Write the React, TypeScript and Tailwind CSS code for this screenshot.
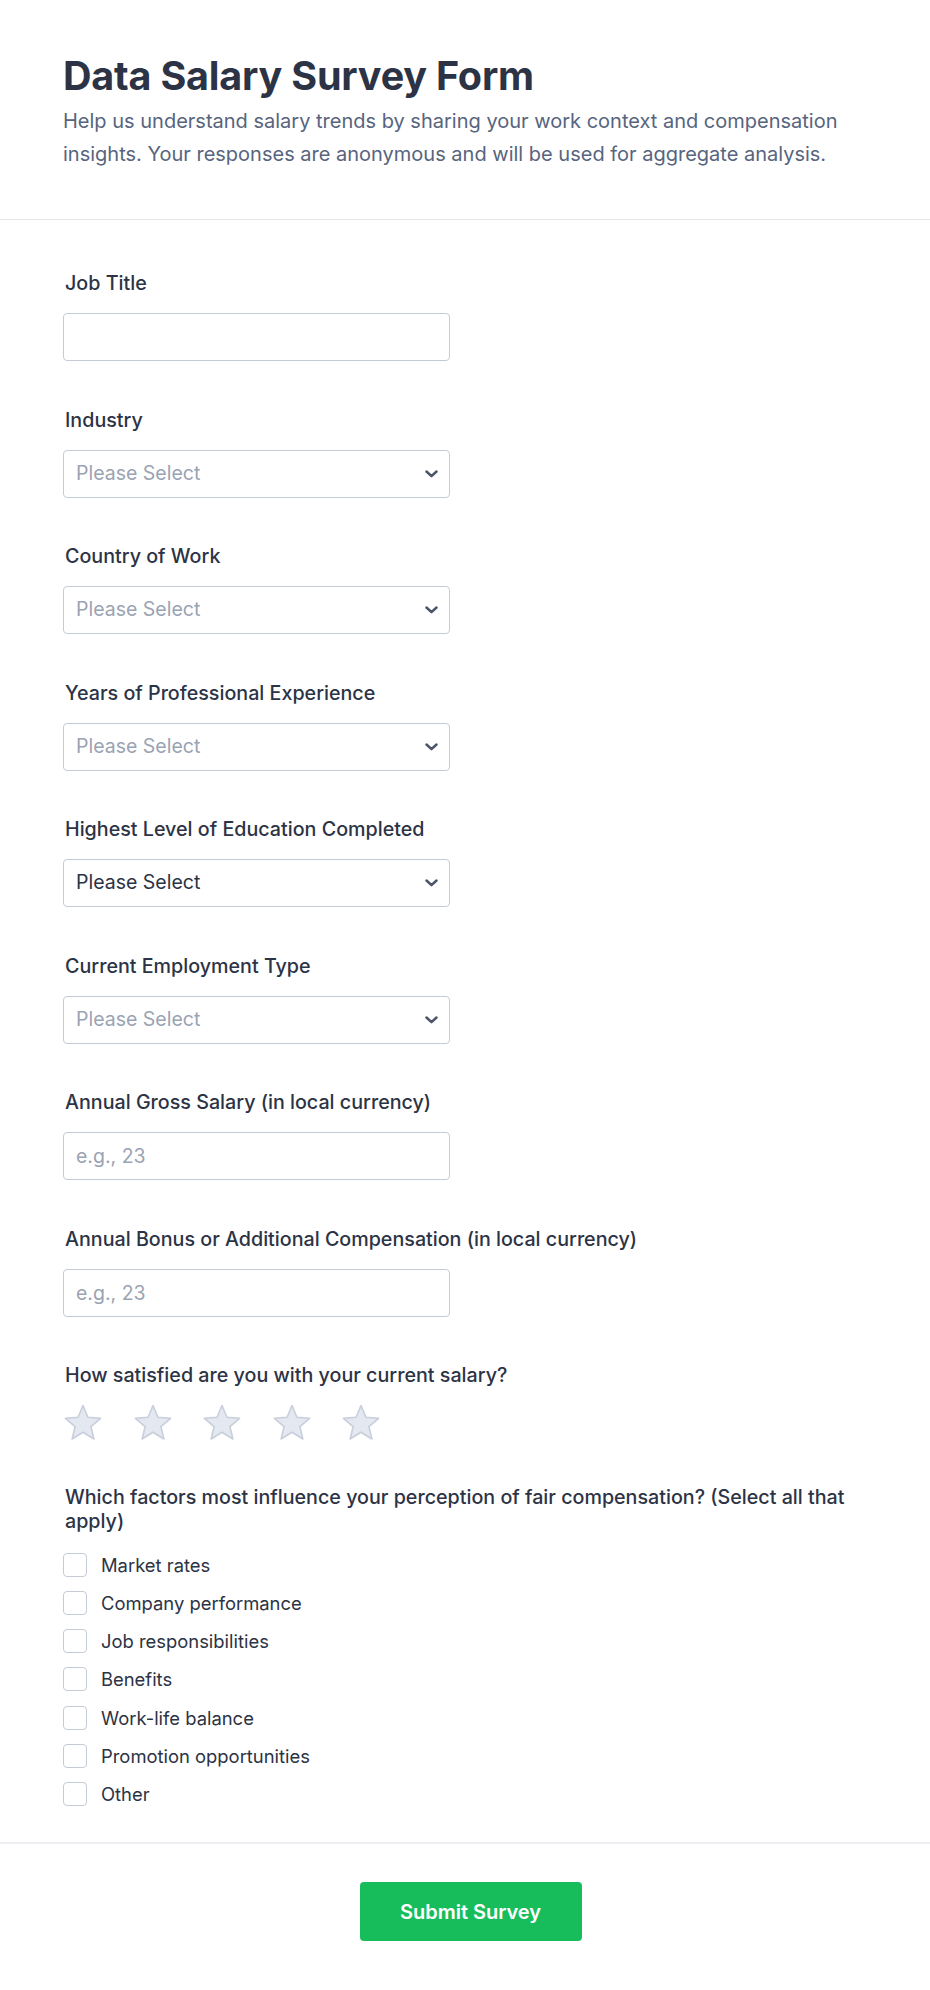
import React from "react";

const labelCls =
  "block pl-[2px] text-[19.7px] leading-[24px] font-medium text-[#2c3345]";

function Chevron() {
  return (
    <svg
      className="pointer-events-none absolute right-[12px] top-1/2 -translate-y-1/2"
      width="13"
      height="8"
      viewBox="0 0 13 8"
      fill="none"
    >
      <path
        d="M1.5 1.5L6.5 6.2L11.5 1.5"
        stroke="#4b5569"
        strokeWidth="2.5"
        strokeLinecap="round"
        strokeLinejoin="round"
      />
    </svg>
  );
}

function TextField({ label, placeholder }: { label: string; placeholder?: string }) {
  return (
    <div className="flex flex-col gap-[18px]">
      <label className={labelCls}>{label}</label>
      <input
        type="text"
        placeholder={placeholder}
        className="h-[48px] w-[387px] rounded-[4px] border border-[#c5cbd6] bg-white px-[12px] text-[19.5px] text-[#2c3345] outline-none placeholder:text-[#9aa3b3]"
      />
    </div>
  );
}

function SelectField({ label, dark }: { label: string; dark?: boolean }) {
  return (
    <div className="flex flex-col gap-[18px]">
      <label className={labelCls}>{label}</label>
      <div className="relative w-[387px]">
        <select
          defaultValue=""
          className={
            dark
              ? "h-[48px] w-full appearance-none rounded-[4px] border border-[#c5cbd6] bg-white px-[12px] text-[19.5px] text-[#2c3345] outline-none"
              : "h-[48px] w-full appearance-none rounded-[4px] border border-[#c5cbd6] bg-white px-[12px] text-[19.5px] text-[#9aa3b3] outline-none"
          }
        >
          <option value="">Please Select</option>
        </select>
        <Chevron />
      </div>
    </div>
  );
}

function Star() {
  return (
    <svg width="40" height="38" viewBox="0 0 40 38" fill="none">
      <path
        d="M20 1.5 L24.88 13.29 L37.6 14.28 L27.89 22.56 L30.87 34.97 L20 28.3 L9.13 34.97 L12.11 22.56 L2.4 14.28 L15.12 13.29 Z"
        fill="#e4e8f0"
        stroke="#c8cedb"
        strokeWidth="1.6"
        strokeLinejoin="round"
      />
    </svg>
  );
}

const factors = [
  "Market rates",
  "Company performance",
  "Job responsibilities",
  "Benefits",
  "Work-life balance",
  "Promotion opportunities",
  "Other",
];

export default function App() {
  return (
    <div className="min-h-[1990px] bg-white font-['Inter','Noto_Sans',sans-serif]">
      <header className="border-b border-[#e3e5ea] px-[63px] pt-[52px] pb-[48px]">
        <h1 className="text-[39.5px] leading-[48px] font-bold tracking-[-0.005em] text-[#2c3345]">
          Data Salary Survey Form
        </h1>
        <p className="mt-[5px] text-[20px] leading-[33px] text-[#57647e]">
          Help us understand salary trends by sharing your work context and compensation
          insights. Your responses are anonymous and will be used for aggregate analysis.
        </p>
      </header>

      <form className="flex flex-col gap-[46.5px] px-[63px] pt-[51px] pb-[36px]">
        <TextField label="Job Title" />
        <SelectField label="Industry" />
        <SelectField label="Country of Work" />
        <SelectField label="Years of Professional Experience" />
        <SelectField label="Highest Level of Education Completed" dark />
        <SelectField label="Current Employment Type" />
        <TextField label="Annual Gross Salary (in local currency)" placeholder="e.g., 23" />
        <TextField
          label="Annual Bonus or Additional Compensation (in local currency)"
          placeholder="e.g., 23"
        />

        <div className="flex flex-col gap-[17px]">
          <label className={labelCls}>How satisfied are you with your current salary?</label>
          <div className="flex gap-[29.5px]">
            {[0, 1, 2, 3, 4].map((i) => (
              <Star key={i} />
            ))}
          </div>
        </div>

        <div className="mt-[-4px] flex flex-col gap-[20px]">
          <label className={labelCls}>
            Which factors most influence your perception of fair compensation? (Select all that
            apply)
          </label>
          <div className="flex flex-col gap-[14.3px]">
            {factors.map((f) => (
              <label key={f} className="flex items-center gap-[14px]">
                <span className="h-[24px] w-[24px] shrink-0 rounded-[4px] border border-[#c5cbd6] bg-white" />
                <span className="text-[18.4px] leading-[24px] text-[#2c3345]">{f}</span>
              </label>
            ))}
          </div>
        </div>
      </form>

      <div className="flex justify-center border-t-2 border-[#eceef2] pt-[38px] pb-[49px]">
        <button
          type="button"
          className="ml-[11px] h-[59px] w-[222px] rounded-[4px] bg-[#18bd5b] text-[20px] font-semibold text-white"
        >
          Submit Survey
        </button>
      </div>
    </div>
  );
}
